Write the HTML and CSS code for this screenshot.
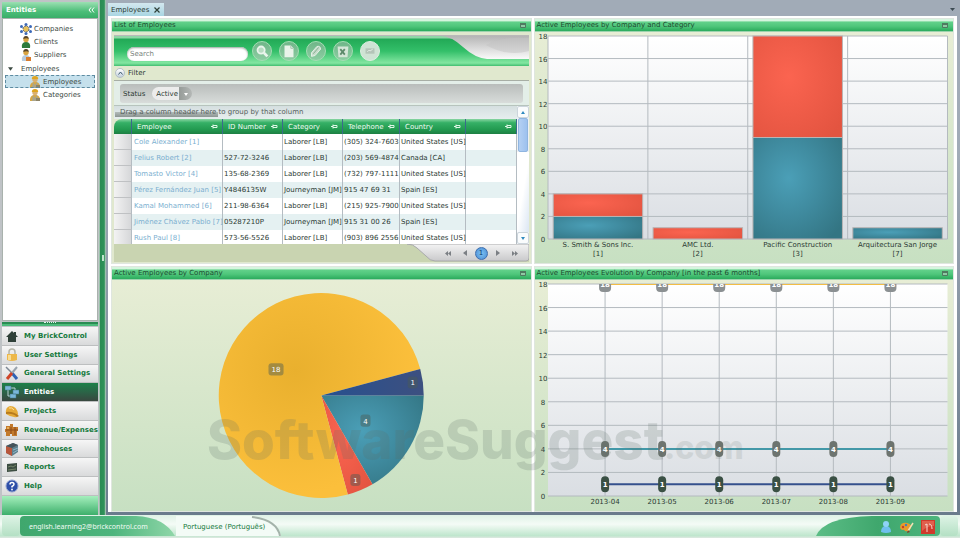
FILE: index.html
```
<!DOCTYPE html>
<html lang="en">

<head>
    <meta charset="utf-8">
    <title>Employees</title>
    <link rel="stylesheet" href="styles.css">
    <script src="charts.js" defer></script>
</head>

<body>
    <!-- Shared icon shapes -->
    <svg class="defs" aria-hidden="true">
        <defs>
            <symbol id="i-person" viewBox="0 0 12 12">
                <path d="M2 12q-1-5 3-6h2q4 1 3 6z" fill="currentColor" />
                <circle cx="6" cy="3.500" r="2.700" fill="#d9a441" />
                <path d="M3.300 3q0-3 2.700-3t2.700 3q-2-1.500-5.400 0z" fill="#5a4526" />
            </symbol>
            <symbol id="i-worker" viewBox="0 0 12 12">
                <path d="M1 12q-.5-5 3.500-6h3q4 1 3.500 6z" fill="#d8a844" />
                <path d="M4 6l2 3 2-3 1 6H3z" fill="#a9a58c" />
                <circle cx="6" cy="3.500" r="2.700" fill="#d9b071" />
                <path d="M2.800 3q0-3 3.200-3t3.200 3z" fill="#e0a520" />
                <path d="M7 9h4v3H7z" fill="#8d8468" />
            </symbol>
            <symbol id="i-pin" viewBox="0 0 7 5">
                <path d="M0 2.500h2M2 .5v4M2 1.500h4v2H2" fill="none" stroke="#dff5e6" />
            </symbol>
            <symbol id="i-window" viewBox="0 0 6 5">
                <path d="M.5 .5h5v4h-5z" fill="#8fc9a4" stroke="#4f7a60" />
                <path d="M0 0h6v2H0z" fill="#4f7a60" />
            </symbol>
            <radialGradient id="g-teal" cx=".4" cy=".4" r=".75">
                <stop offset="0" stop-color="#4b9fb7" />
                <stop offset=".5" stop-color="#3f8a9e" />
                <stop offset="1" stop-color="#337583" />
            </radialGradient>
            <radialGradient id="g-red" cx=".4" cy=".4" r=".75">
                <stop offset="0" stop-color="#fb6450" />
                <stop offset="1" stop-color="#e35440" />
            </radialGradient>
            <radialGradient id="g-yellow" cx=".38" cy=".38" r=".6">
                <stop offset="0" stop-color="#e9b02e" />
                <stop offset="1" stop-color="#fbbf3b" />
            </radialGradient>
            <linearGradient id="g-navy">
                <stop offset="0" stop-color="#27508f" />
                <stop offset="1" stop-color="#3d5080" />
            </linearGradient>
            <linearGradient id="g-plot" x2="0" y2="1">
                <stop offset="0" stop-color="#ffffff" />
                <stop offset="1" stop-color="#dadee3" />
            </linearGradient>
            <linearGradient id="g-swoosh" x2="0" y2="1">
                <stop offset="0" stop-color="#b5b5b5" />
                <stop offset="1" stop-color="#fafafa" />
            </linearGradient>
            <linearGradient id="g-pager" x2="0" y2="1">
                <stop offset="0" stop-color="#f4f4f4" />
                <stop offset="1" stop-color="#c9c9cb" />
            </linearGradient>
            <linearGradient id="g-leaf">
                <stop offset="0" stop-color="#5cbd86" />
                <stop offset=".5" stop-color="#3fa76d" />
                <stop offset="1" stop-color="#4db57d" />
            </linearGradient>
            <linearGradient id="g-user">
                <stop offset="0" stop-color="#3fa76d" />
                <stop offset=".6" stop-color="#4db57d" />
                <stop offset="1" stop-color="#8fd6a8" />
            </linearGradient>
        </defs>
    </svg>

    <div class="workspace">
        <aside class="sidebar">
            <header class="side-title">
                <span>Entities</span>
                <button class="icon-btn" type="button" aria-label="Collapse">
                    <svg width="7" height="6" viewBox="0 0 7 6"><path d="M3 .5L1 3l2 2.500M6 .5L4 3l2 2.500" fill="none" stroke="#fff" /></svg>
                </button>
            </header>

            <ul class="tree">
                <li class="leaf"><a href="#companies">
                    <svg class="tree-icon" viewBox="0 0 12 12">
                        <g fill="#3c69b8"><circle cx="6" cy="1.500" r="1.500" /><circle cx="6" cy="10.500" r="1.500" /><circle cx="1.500" cy="3.500" r="1.500" /><circle cx="10.500" cy="3.500" r="1.500" /><circle cx="1.500" cy="8.500" r="1.500" /><circle cx="10.500" cy="8.500" r="1.500" /></g>
                        <circle cx="6" cy="6" r="3" fill="#e8c25a" stroke="#54617a" stroke-dasharray="2 1" />
                    </svg>Companies</a></li>
                <li class="leaf"><a href="#clients"><svg class="tree-icon client"><use href="#i-person" /></svg>Clients</a></li>
                <li class="leaf"><a href="#suppliers"><svg class="tree-icon supplier"><use href="#i-person" /><path d="M6 8h5v4H6z" fill="#d97c2c" /></svg>Suppliers</a></li>
                <li class="branch"><a href="#all"><svg class="arrow" viewBox="0 0 6 4"><path d="M0 0h6L3 4z" fill="#3c4a42" /></svg>Employees</a></li>
                <li class="child selected"><a href="#employees"><svg class="tree-icon"><use href="#i-worker" /></svg>Employees</a></li>
                <li class="child"><a href="#categories"><svg class="tree-icon"><use href="#i-worker" /></svg>Categories</a></li>
            </ul>

            <div class="side-split"></div>

            <nav class="modules">
                <a href="#home"><svg viewBox="0 0 14 14"><path d="M1 8l6-6 2 2V3h2v3l2 2h-2v5H3V8z" fill="#2f4038" /></svg>My BrickControl</a>
                <a href="#user"><svg viewBox="0 0 14 14"><path d="M4 7V4q0-3 3-3t3 3v3" fill="none" stroke="#b5b5a8" stroke-width="1.500" /><path d="M2 6h10v6q-5 2-10 0z" fill="#edb84a" /><path d="M3 7h3v5H3z" fill="#f9dc92" /></svg>User Settings</a>
                <a href="#general"><svg viewBox="0 0 14 14"><path d="M1 1l7 7" stroke="#7d8894" stroke-width="1.500" /><path d="M7 7l5 6" stroke="#2f62b5" stroke-width="3" /><path d="M12 1L7 7" stroke="#9aa4ad" stroke-width="2" /><path d="M7 7l-5 6" stroke="#cf4428" stroke-width="3" /></svg>General Settings</a>
                <a class="active" href="#entities"><svg viewBox="0 0 14 14"><path d="M3 4v7h5M5 3h5v3" fill="none" stroke="#b8d3d4" /><path d="M0 1h6v4H0zM8 5h6v4H8zM5 9h6v4H5z" fill="#79b7d8" stroke="#40788f" stroke-width=".5" /></svg>Entities</a>
                <a href="#projects"><svg viewBox="0 0 14 14"><path d="M1 10Q0 3 5 2q7 0 8 8l-1 3q-5 1-11-3z" fill="#e5aa37" /><path d="M1 10q7-1 11 3l2-1Q8 7 1 8z" fill="#b77b1d" /><path d="M4 4q3-1 5 2" fill="none" stroke="#ffe09a" /></svg>Projects</a>
                <a href="#money"><svg viewBox="0 0 14 14"><path d="M1 3h4V1h3v3h5v4h-1v5H7v-2H5v2H1V9H0V6h1z" fill="#c37a2c" /><path d="M6 4v7M1 7h12M10 4v8" stroke="#8c4a18" /><path d="M2 4h2v2H2z" fill="#e8b057" /></svg>Revenue/Expenses</a>
                <a href="#warehouses"><svg viewBox="0 0 14 14"><path d="M1 4l7-3 5 2v7l-6 4-6-3z" fill="#5f7f8c" /><path d="M1 4l6 2v8l-6-3z" fill="#b8573c" /><path d="M1 4l7-3 5 2-6 3z" fill="#44535a" /><path d="M8 8l5-2M8 11l5-3" stroke="#8bb7c9" /></svg>Warehouses</a>
                <a href="#reports"><svg viewBox="0 0 14 14"><path d="M2 4l10-1v8l-10 1z" fill="#3c4d42" /><path d="M3 7l3-1 2 1 3-2M3 10l8-1" fill="none" stroke="#75856a" /></svg>Reports</a>
                <a href="#help"><svg viewBox="0 0 14 14"><circle cx="7" cy="7" r="6" fill="#2e4fa8" stroke="#8d9fcf" /><path d="M5 5.500q0-2 2-2t2 1.800q0 1-2 2.200v1" fill="none" stroke="#fff" stroke-width="1.500" /><circle cx="7" cy="10.500" r=".9" fill="#fff" /></svg>Help</a>
            </nav>
            <div class="side-foot"></div>
        </aside>

        <div class="gutter"></div>

        <main class="main">
            <div class="tabs">
                <div class="tab">
                    <a href="#employees">Employees</a>
                    <button class="icon-btn" type="button" aria-label="Close tab">
                        <svg width="6" height="6" viewBox="0 0 6 6"><path d="M.5 .5l5 5M5.500 .5l-5 5" stroke="#2f4038" stroke-width="1.200" /></svg>
                    </button>
                </div>
                <button class="icon-btn" type="button" aria-label="Tab list">
                    <svg width="5" height="3" viewBox="0 0 5 3"><path d="M0 0h5L2.500 3z" fill="#3c4a52" /></svg>
                </button>
            </div>

            <div class="dashboard">
                <section class="panel">
                    <header class="panel-title">
                        <h2>List of Employees</h2>
                        <button class="icon-btn" type="button" aria-label="Maximize"><svg width="6" height="5"><use href="#i-window" /></svg></button>
                    </header>
                    <div class="list">
                        <div class="toolbar">
                            <input class="search" type="search" placeholder="Search" aria-label="Search">
                            <button class="round" type="button" aria-label="Find"><svg viewBox="0 0 20 20"><circle cx="9" cy="9" r="4" fill="#b9dcc3" stroke="#e9f5ec" stroke-width="2" /><path d="M12 12l4 4" stroke="#e9f5ec" stroke-width="3" /></svg></button>
                            <button class="round" type="button" aria-label="New"><svg viewBox="0 0 20 20"><path d="M5 4h7l3 3v10H5z" fill="#e9f3ea" /><path d="M12 4v3h3" fill="none" stroke="#9fbfa8" /></svg></button>
                            <button class="round" type="button" aria-label="Edit"><svg viewBox="0 0 20 20"><path d="M5 12l6-7q4-1 4 3l-6 7-4 1z" fill="#c7dccb" stroke="#e9f3ea" /><path d="M7 13l6-7" stroke="#7fa98b" /></svg></button>
                            <button class="round" type="button" aria-label="Delete"><svg viewBox="0 0 20 20"><path d="M4 5h12l-1 12H5z" fill="#d5e6d8" /><path d="M7 8l5 6M12 8l-5 6" stroke="#5d8a6b" stroke-width="2" /></svg></button>
                            <button class="round off" type="button" aria-label="Export"><svg viewBox="0 0 20 20"><path d="M5 7h10v6H5z" fill="#b4c5b8" /><path d="M7 11l2-2 1 1 3-2" fill="none" stroke="#e8efe9" /></svg></button>
                            <svg class="swoosh" viewBox="0 0 88 30" preserveAspectRatio="none">
                                <path d="M0 0h88v23H46Q34 22 22 11T0 0z" fill="url(#g-swoosh)" />
                                <path d="M45 9q14-9 43-7v13q-22 6-43-6z" fill="#c4c4c4" opacity=".5" />
                            </svg>
                        </div>

                        <div class="filter-head">
                            <button class="fold" type="button" aria-label="Collapse filter"><svg width="5" height="4" viewBox="0 0 5 4"><path d="M.5 3.500l2-2.500 2 2.500" fill="none" stroke="#3c5a70" /></svg></button>
                            Filter
                        </div>
                        <div class="filter">
                            <div class="filter-box">
                                <label for="status">Status</label>
                                <span class="select-wrap">
                                    <select id="status">
                                        <option>Active</option>
                                        <option>Inactive</option>
                                    </select>
                                </span>
                            </div>
                        </div>

                        <div class="grid-area">
                            <div class="grid-left">
                                <div class="group-bar">Drag a column header here to group by that column</div>
                                <table class="grid">
                                    <thead>
                                        <tr>
                                            <th class="c-mark"></th>
                                            <th class="c-name"><span>Employee<svg><use href="#i-pin" /></svg></span></th>
                                            <th class="c-id"><span>ID Number<svg><use href="#i-pin" /></svg></span></th>
                                            <th class="c-cat"><span>Category<svg><use href="#i-pin" /></svg></span></th>
                                            <th class="c-tel"><span>Telephone<svg><use href="#i-pin" /></svg></span></th>
                                            <th class="c-country"><span>Country<svg><use href="#i-pin" /></svg></span></th>
                                            <th><span class="only-pin"><svg><use href="#i-pin" /></svg></span></th>
                                        </tr>
                                    </thead>
                                    <tbody>
                                        <tr><td></td><td><a href="#e1">Cole Alexander [1]</a></td><td></td><td>Laborer [LB]</td><td>(305) 324-7603</td><td>United States [US]</td><td></td></tr>
                                        <tr><td></td><td><a href="#e2">Felius Robert [2]</a></td><td>527-72-3246</td><td>Laborer [LB]</td><td>(203) 569-4874</td><td>Canada [CA]</td><td></td></tr>
                                        <tr><td></td><td><a href="#e4">Tomasto Victor [4]</a></td><td>135-68-2369</td><td>Laborer [LB]</td><td>(732) 797-1111</td><td>United States [US]</td><td></td></tr>
                                        <tr><td></td><td><a href="#e5">Pérez Fernández Juan [5]</a></td><td>Y4846135W</td><td>Journeyman [JM]</td><td>915 47 69 31</td><td>Spain [ES]</td><td></td></tr>
                                        <tr><td></td><td><a href="#e6">Kamal Mohammed [6]</a></td><td>211-98-6364</td><td>Laborer [LB]</td><td>(215) 925-7900</td><td>United States [US]</td><td></td></tr>
                                        <tr><td></td><td><a href="#e7">Jiménez Chávez Pablo [7]</a></td><td>05287210P</td><td>Journeyman [JM]</td><td>915 31 00 26</td><td>Spain [ES]</td><td></td></tr>
                                        <tr><td></td><td><a href="#e8">Rush Paul [8]</a></td><td>573-56-5526</td><td>Laborer [LB]</td><td>(903) 896 2556</td><td>United States [US]</td><td></td></tr>
                                    </tbody>
                                </table>
                            </div>
                            <div class="scroll">
                                <button type="button" aria-label="Scroll up"><svg width="4" height="3" viewBox="0 0 4 3"><path d="M0 3h4L2 0z" fill="#2f8ac0" /></svg></button>
                                <div class="thumb"></div>
                                <div class="track"></div>
                                <button type="button" aria-label="Scroll down"><svg width="4" height="3" viewBox="0 0 4 3"><path d="M0 0h4L2 3z" fill="#2f8ac0" /></svg></button>
                            </div>
                        </div>

                        <div class="pager-row">
                            <nav class="pager" aria-label="Pages">
                                <svg class="pager-bg" viewBox="0 0 122 18" preserveAspectRatio="none"><path d="M0 0h122v14q0 3-3 3H28q-5 0-9-5L10 4Q6 0 0 0z" fill="url(#g-pager)" stroke="#a9aaac" /></svg>
                                <button type="button" aria-label="First"><svg width="6" height="5" viewBox="0 0 6 5"><path d="M3 0v5L0 2.500zM6 0v5L3 2.500z" fill="#7b7f84" /></svg></button>
                                <button type="button" aria-label="Previous"><svg width="4" height="6" viewBox="0 0 4 6"><path d="M4 0v6L0 3z" fill="#7b7f84" /></svg></button>
                                <button class="page" type="button">1</button>
                                <button type="button" aria-label="Next"><svg width="4" height="6" viewBox="0 0 4 6"><path d="M0 0v6l4-3z" fill="#7b7f84" /></svg></button>
                                <button type="button" aria-label="Last"><svg width="6" height="5" viewBox="0 0 6 5"><path d="M0 0v5l3-2.500zM3 0v5l3-2.500z" fill="#7b7f84" /></svg></button>
                            </nav>
                        </div>
                    </div>
                </section>

                <section class="panel">
                    <header class="panel-title">
                        <h2>Active Employees by Company and Category</h2>
                        <button class="icon-btn" type="button" aria-label="Maximize"><svg width="6" height="5"><use href="#i-window" /></svg></button>
                    </header>
                    <div class="chart tall-labels"><svg id="bars"></svg></div>
                </section>

                <section class="panel">
                    <header class="panel-title">
                        <h2>Active Employees by Company</h2>
                        <button class="icon-btn" type="button" aria-label="Maximize"><svg width="6" height="5"><use href="#i-window" /></svg></button>
                    </header>
                    <div class="chart pie"><svg id="pie" viewBox="-102 -102 204 204"></svg></div>
                </section>

                <section class="panel">
                    <header class="panel-title">
                        <h2>Active Employees Evolution by Company [in the past 6 months]</h2>
                        <button class="icon-btn" type="button" aria-label="Maximize"><svg width="6" height="5"><use href="#i-window" /></svg></button>
                    </header>
                    <div class="chart"><svg id="lines"></svg></div>
                </section>
            </div>
        </main>
    </div>

    <footer class="status">
        <div class="cap"></div>
        <div class="user">
            <svg class="shape" viewBox="0 0 156 20" preserveAspectRatio="none"><path d="M4 0h112q28 1 39 20H4q-4 0-4-4V4q0-4 4-4z" fill="url(#g-user)" /></svg>
            <span>english.learning2@brickcontrol.com</span>
        </div>
        <a class="lang" href="#lang">
            <svg class="shape" viewBox="0 0 106 20" preserveAspectRatio="none"><path d="M0 0h76q25 3 29 20H0z" fill="#f3fbf6" /><path d="M76 1q25 3 28 19" fill="none" stroke="#a4b3aa" stroke-width="2" /></svg>
            <span>Portuguese (Português)</span>
        </a>
        <div class="tray">
            <svg class="shape" viewBox="0 0 124 20" preserveAspectRatio="none"><path d="M0 20Q8 1 56 0h64q4 0 4 4v12q0 4-4 4z" fill="url(#g-leaf)" /></svg>
            <button type="button" aria-label="Users"><svg viewBox="0 0 14 14"><path d="M2 12q0-5 4-6h2q4 1 4 6-5 2-10 0z" fill="#6fc0ee" /><circle cx="7" cy="4" r="3" fill="#8fd3f6" /></svg></button>
            <button type="button" aria-label="Theme"><svg viewBox="0 0 14 14"><path d="M0 7q1-5 7-4 5 1 4 5-2 4-6 3-1-2-3-1-2-1-2-3z" fill="#e89b2b" /><circle cx="3" cy="7" r="1.200" fill="#c5402c" /><circle cx="6" cy="5" r="1.200" fill="#3f7fc0" /><path d="M13 3l-5 8" stroke="#f1e2b5" stroke-width="1.500" /><path d="M8 10l2 2-3 1z" fill="#8a3d20" /></svg></button>
            <button type="button" aria-label="Exit"><svg viewBox="0 0 14 14"><path d="M0 0h14v14H0z" fill="#cf3a2c" /><path d="M1 1h12v5Q6 6 1 11z" fill="#e0604d" /><path d="M4 5l2-1v8M8 4q3 0 3 5" fill="none" stroke="#f8d9d0" /></svg></button>
        </div>
        <div class="cap"></div>
    </footer>

    <div class="watermark">SoftwareSuggest<small>.com</small></div>
</body>

</html>
```
FILE: styles.css
```
* {
    box-sizing: border-box;
}

body {
    margin: 0;
    height: 100vh;
    display: flex;
    flex-direction: column;
    overflow: hidden;
    position: relative;
    font-family: "DejaVu Sans", Verdana, sans-serif;
    font-size: 7px;
    line-height: 10px;
    color: #2b3a33;
    background-color: #eef3ef;
}

a {
    color: inherit;
    text-decoration: none;
}

button,
input,
select {
    font: inherit;
    color: inherit;
    margin: 0;
    padding: 0;
    border: 0;
    background: none;
}

svg {
    display: block;
    flex: none;
}

.defs {
    position: absolute;
    width: 0;
    height: 0;
}

.icon-btn {
    display: flex;
}

.workspace {
    flex: 1;
    min-height: 0;
    display: flex;
}

/* ---- sidebar ---- */
.sidebar {
    width: 99px;
    display: flex;
    flex-direction: column;
    padding: 2px 1px 0 2px;
    background-color: #bfc3c6;
}

.side-title {
    display: flex;
    justify-content: space-between;
    align-items: center;
    height: 16px;
    padding: 0 3px 0 4px;
    color: #fff;
    font-weight: bold;
    background: linear-gradient(#9be0b2, #4bbd78 60%, #3aae69);
}

.tree {
    flex: 1;
    margin: 0;
    padding: 3px 2px 0;
    list-style: none;
    background-color: #fff;
    border: 1px solid #a9b2ad;
}

.tree li {
    height: 13px;
    color: #3d4a44;
}

.tree li:nth-child(3n) {
    height: 14px;
}

.tree a {
    display: flex;
    align-items: center;
    gap: 2px;
    height: 100%;
}

.tree-icon {
    width: 12px;
    height: 12px;
}

.client {
    color: #2d7a3b;
}

.supplier {
    color: #b9cbdc;
}

.tree .leaf {
    padding-left: 15px;
}

.tree .branch {
    padding-left: 3px;
}

.tree .branch a {
    gap: 8px;
}

.arrow {
    width: 5px;
    height: 4px;
}

.tree .child {
    padding-left: 24px;
}

.selected {
    background-color: #c5e0ec;
    outline: 1px dashed #5d8ba1;
    outline-offset: -1px;
}

.side-split {
    height: 4px;
    margin: 1px 0;
    background: linear-gradient(#2a8c53 50%, #4cbb7b 50%);
}

.side-split::before {
    content: "";
    display: block;
    width: 12px;
    margin: 0 auto;
    border-top: 1px dotted #e3f6ea;
}

.modules {
    display: grid;
    grid-template-rows: repeat(9, 1fr);
    height: 169px;
}

.modules a {
    display: flex;
    align-items: center;
    gap: 5px;
    padding-left: 3px;
    font-weight: bold;
    white-space: nowrap;
    color: #13793b;
    background: linear-gradient(#f6f6f6, #d9dadb);
    border-bottom: 1px solid #bdbfc0;
}

.modules svg {
    width: 14px;
    height: 14px;
}

.modules .active {
    color: #fff;
    background: linear-gradient(#1d8049, #2b6447 50%, #38473f);
}

.side-foot {
    height: 19px;
    background: linear-gradient(#a5efbd, #3daf6b);
}

.gutter {
    width: 7px;
    background: linear-gradient(#bfe5cc, #bfe5cc) center / 2px 6px no-repeat, linear-gradient(90deg, #d9e3dc, #2b8c54 20%, #2f9259 75%, #c9d4cd);
}

/* ---- main area ---- */
.main {
    flex: 1;
    min-width: 0;
    display: flex;
    flex-direction: column;
    padding: 2px 3px 3px 2px;
    background: linear-gradient(#a1abb7 30%, #6a7b8c);
}

.tabs {
    display: flex;
    justify-content: space-between;
    align-items: center;
    height: 14px;
    padding-right: 2px;
}

.tab {
    display: flex;
    align-items: center;
    gap: 5px;
    height: 13px;
    align-self: flex-end;
    padding: 0 4px 0 3px;
    background: linear-gradient(#d3e8ef, #a9d5e2);
}

.dashboard {
    flex: 1;
    min-height: 0;
    display: grid;
    grid-template-columns: 1fr 1fr;
    grid-template-rows: 1fr 1fr;
    gap: 2px;
    padding: 2px 3px 0;
    background-color: #fff;
}

.panel {
    min-width: 0;
    min-height: 0;
    display: flex;
    flex-direction: column;
    border: 1px solid #dfe6df;
    background: linear-gradient(#e9eed6, #c7e0c2);
}

.panel-title {
    display: flex;
    justify-content: space-between;
    align-items: center;
    height: 13px;
    padding: 0 5px 0 2px;
    background: linear-gradient(#d5f5de, #d5f5de 15%, #62d18a 25%, #4fc67b 60%, #2bab5c);
    border-bottom: 1px solid #9dd3ae;
}

.panel-title h2 {
    margin: 0;
    font-size: 7px;
    font-weight: normal;
    color: #1d4a30;
}

/* ---- employee list ---- */
.list {
    flex: 1;
    min-height: 0;
    display: flex;
    flex-direction: column;
    padding: 3px 2px 1px;
    background-color: #e0e8ce;
}

.toolbar {
    position: relative;
    display: flex;
    align-items: center;
    gap: 7px;
    height: 31px;
    padding: 0 13px;
    background: linear-gradient(#8fd6a6 0 2px, #22a956 3px, #33bf69 50%, #83e6a1 90%, #41bd70);
    border-top: 1px solid #b9b9b9;
}

.search {
    width: 121px;
    height: 14px;
    padding: 0 3px;
    margin-top: 6px;
    margin-right: -3px;
    border-radius: 7px;
    background-color: #fff;
    box-shadow: inset 0 1px 2px #9aa69e;
}

.search::placeholder {
    color: #777f7b;
}

.round {
    width: 20px;
    height: 20px;
    border-radius: 50%;
    border: 1px solid #a5dcb4;
    background: linear-gradient(#6fb588, #8ccda2);
}

.round.off {
    background: #cfe3d4;
    border-color: #dcefe0;
}

.swoosh {
    position: absolute;
    top: 0;
    right: 0;
    width: 88px;
    height: 30px;
}

.filter-head {
    display: flex;
    align-items: center;
    gap: 3px;
    height: 14px;
    padding-left: 1px;
}

.fold {
    display: flex;
    align-items: center;
    justify-content: center;
    width: 10px;
    height: 10px;
    border-radius: 50%;
    background: linear-gradient(#fff, #c2d0dc);
    border: 1px solid #b4c0c8;
}

.filter {
    padding: 3px 6px 2px;
    background-color: #e3eee8;
    border-top: 1px solid #a7aea5;
    border-bottom: 1px solid #b7c4bd;
}

.filter-box {
    display: flex;
    align-items: center;
    gap: 7px;
    height: 19px;
    padding: 0 3px;
    border-radius: 3px;
    background: linear-gradient(#b9bdbb, #d8dcda);
}

.select-wrap {
    position: relative;
}

.select-wrap::after {
    content: "";
    position: absolute;
    right: 4px;
    top: 6px;
    border: 2px solid transparent;
    border-top: 3px solid #fff;
    pointer-events: none;
}

select {
    appearance: none;
    width: 40px;
    height: 13px;
    padding-left: 4px;
    border-radius: 7px;
    background: linear-gradient(90deg, #ececec 68%, #969b98 68%, #b4b8b6);
}

.grid-area {
    flex: 1;
    min-height: 0;
    display: flex;
    overflow: hidden;
}

.grid-left {
    flex: 1;
    min-width: 0;
}

.group-bar {
    height: 13px;
    padding: 1px 6px;
    color: #56605b;
    background: linear-gradient(#b3bcba, #8d9693) 1px 6px / 103px 5px no-repeat, linear-gradient(#d5dfe0, #e6eeee);
}

.grid {
    width: 100%;
    table-layout: fixed;
    border-collapse: separate;
    border-spacing: 0;
}

.grid th {
    height: 15px;
    padding: 0;
    font-weight: normal;
    color: #effaf2;
    background: linear-gradient(#8ad6a3, #35b066 25%, #229a50 70%, #1d7f43);
    border-right: 1px solid #3a6a8c;
}

.grid th:first-child {
    border-top-left-radius: 8px;
}

.grid th span {
    display: flex;
    justify-content: space-between;
    align-items: center;
    padding: 0 4px 0 5px;
}

.grid th .only-pin {
    justify-content: flex-end;
}

.grid th svg {
    width: 7px;
    height: 5px;
}

.c-mark { width: 18px; }
.c-name { width: 91px; }
.c-id { width: 60px; }
.c-cat { width: 60px; }
.c-tel { width: 57px; }
.c-country { width: 66px; }

.grid td {
    height: 16px;
    padding: 0 0 0 1px;
    white-space: nowrap;
    background-color: #fff;
    border-right: 1px solid #b4bcc2;
}

.grid tr:nth-child(even) td {
    background-color: #e5f1f2;
}

.grid td:nth-child(2) {
    padding-left: 2px;
    color: #7bafd0;
}

.grid tbody tr td:first-child {
    background: linear-gradient(90deg, #f3f3f3, #d6d7d9);
    border-bottom: 1px solid #bfc1c3;
}

.scroll {
    display: flex;
    flex-direction: column;
    width: 12px;
    background-color: #eef1f4;
}

.scroll button {
    display: flex;
    align-items: center;
    justify-content: center;
    height: 12px;
    border: 1px solid #ccd5dc;
    border-radius: 2px;
    background-color: #fafcfd;
}

.thumb {
    height: 34px;
    margin: 0 1px;
    border: 1px solid #8fb5e0;
    border-radius: 2px;
    background: linear-gradient(90deg, #b4d0f3, #9dc1ee);
}

.track {
    flex: 1;
    background: linear-gradient(100deg, #fff 50%, #dbe6f3);
}

.pager-row {
    display: flex;
    justify-content: flex-end;
    height: 18px;
    background-color: #c9d4b1;
}

.pager {
    position: relative;
    display: flex;
    align-items: center;
    justify-content: flex-end;
    gap: 12px;
    width: 122px;
    padding-right: 11px;
}

.pager button {
    position: relative;
}

.pager-bg {
    position: absolute;
    left: 0;
    top: 0;
    width: 100%;
    height: 18px;
}

.pager .page {
    width: 13px;
    height: 13px;
    margin: 0 -4px;
    border-radius: 50%;
    border: 1px solid #3d6fae;
    color: #123a66;
    background: radial-gradient(#7cc3f2, #4a8ad4);
}

/* ---- charts ---- */
.chart {
    flex: 1;
    min-height: 0;
    padding: 4px 6px 15px 13px;
}

.chart.tall-labels {
    padding-bottom: 24px;
}

.chart.pie {
    padding: 13px;
}

.chart > svg {
    width: 100%;
    height: 100%;
    overflow: visible;
}

.chart text {
    font-size: 7px;
    text-anchor: middle;
    fill: #2b3a33;
}

.chart text.value {
    fill: #fff;
}

.chart text.bold {
    font-weight: bold;
}

.grid-line {
    stroke: #b4babf;
}

/* ---- status bar ---- */
.status {
    display: flex;
    align-items: stretch;
    height: 23px;
    padding: 1px 2px 2px;
    background: linear-gradient(#dff2e6, #f4fbf6 40%, #bfe6cd 90%, #dfe8e2);
}

.status .shape {
    position: absolute;
    left: 0;
    top: 0;
    width: 100%;
    height: 100%;
}

.status span {
    position: relative;
}

.cap {
    width: 18px;
    border-radius: 4px;
    background: linear-gradient(#ddf3e5, #b4e0c4);
}

.user,
.lang,
.tray {
    position: relative;
    display: flex;
    align-items: center;
    padding-top: 2px;
}

.user {
    width: 156px;
    padding-left: 9px;
    font-family: "Noto Sans", sans-serif;
    color: #f1fbf4;
}

.lang {
    width: 106px;
    padding-left: 7px;
    color: #13793b;
}

.tray {
    width: 124px;
    margin-left: auto;
    justify-content: flex-end;
    gap: 7px;
    padding-right: 5px;
}

.tray button {
    position: relative;
    width: 14px;
    height: 14px;
}

.watermark {
    position: absolute;
    left: 207px;
    top: 408px;
    font: 800 53px/64px Inter, "Open Sans", sans-serif;
    color: #5d6e66;
    opacity: .2;
    pointer-events: none;
    white-space: nowrap;
}

.watermark small {
    font-size: 32px;
    opacity: .7;
}
```
FILE: charts.js
```
"use strict";

const SVG = "http://www.w3.org/2000/svg";
const MAX = 18;

function add(parent, tag, attrs, text) {
    const el = document.createElementNS(SVG, tag);
    for (const key in attrs) {
        el.setAttribute(key, attrs[key]);
    }
    if (text !== undefined) {
        el.textContent = text;
    }
    parent.appendChild(el);
    return el;
}

function yPos(value) {
    return (100 - value / MAX * 100) + "%";
}

// Plot background, horizontal lines and the value axis
function drawAxis(svg) {
    add(svg, "rect", { width: "100%", height: "100%", fill: "url(#g-plot)" });
    for (let v = 0; v <= MAX; v += 2) {
        add(svg, "line", { x1: 0, x2: "100%", y1: yPos(v), y2: yPos(v), class: "grid-line" });
        add(svg, "text", { x: -5, y: yPos(v), dy: 3 }, v);
    }
}

function drawBars() {
    const svg = document.getElementById("bars");
    const data = [
        { name: "S. Smith & Sons Inc.", id: "[1]", teal: 2, red: 2 },
        { name: "AMC Ltd.", id: "[2]", teal: 0, red: 1 },
        { name: "Pacific Construction", id: "[3]", teal: 9, red: 9 },
        { name: "Arquitectura San Jorge", id: "[7]", teal: 1, red: 0 }
    ];
    drawAxis(svg);
    for (let i = 0; i <= 4; i++) {
        add(svg, "line", { x1: i * 25 + "%", x2: i * 25 + "%", y1: 0, y2: "100%", class: "grid-line" });
    }
    data.forEach((d, i) => {
        let total = 0;
        ["teal", "red"].forEach((color) => {
            if (!d[color]) return;
            total += d[color];
            add(svg, "rect", {
                x: i * 25 + 1.3 + "%", width: "22.4%",
                y: yPos(total), height: d[color] / MAX * 100 + "%",
                fill: "url(#g-" + color + ")", stroke: "#b9b4b4"
            });
        });
        const mid = i * 25 + 12.5 + "%";
        add(svg, "text", { x: mid, y: "100%", dy: 8 }, d.name);
        add(svg, "text", { x: mid, y: "100%", dy: 17 }, d.id);
    });
}

function drawLines() {
    const svg = document.getElementById("lines");
    const months = ["2013-04", "2013-05", "2013-06", "2013-07", "2013-08", "2013-09"];
    const series = [
        { value: 18, line: "#f2bd45", badge: "#8b9092", width: 12 },
        { value: 4, line: "#4398a8", badge: "#6d746f", width: 8 },
        { value: 1, line: "#35508c", badge: "#3a5044", width: 8 }
    ];
    const step = 100 / 7;
    drawAxis(svg);
    months.forEach((m, i) => {
        const x = (i + 1) * step + "%";
        add(svg, "line", { x1: x, x2: x, y1: 0, y2: "100%", class: "grid-line" });
        add(svg, "text", { x: x, y: "100%", dy: 8 }, m);
    });
    // nested svg clips the badges at the top of the plot
    const plot = add(svg, "svg", { width: "100%", height: "100%" });
    series.forEach((s) => {
        const y = yPos(s.value);
        add(plot, "line", { x1: step + "%", x2: step * 6 + "%", y1: y, y2: y, stroke: s.line, "stroke-width": 2 });
        months.forEach((m, i) => {
            const x = (i + 1) * step + "%";
            const box = add(plot, "svg", { x: x, y: y, overflow: "visible" });
            add(box, "rect", { x: -s.width / 2, y: -8, width: s.width, height: 16, rx: 4, fill: s.badge });
            add(box, "text", { y: 3, class: "value bold" }, s.value);
        });
    });
}

function drawPie() {
    const svg = document.getElementById("pie");
    const data = [
        { value: 4, color: "teal", x: 44, y: 25 },
        { value: 1, color: "red", x: 34, y: 84 },
        { value: 18, color: "yellow", x: -45, y: -26 },
        { value: 1, color: "navy", x: 91, y: -13 }
    ];
    const r = 102;
    let angle = 0;
    data.forEach((d) => {
        const end = angle + d.value / 24 * 2 * Math.PI;
        const large = end - angle > Math.PI ? 1 : 0;
        const path = "M0 0L" + r * Math.cos(angle) + " " + r * Math.sin(angle) +
            "A" + r + " " + r + " 0 " + large + " 1 " + r * Math.cos(end) + " " + r * Math.sin(end) + "Z";
        add(svg, "path", { d: path, fill: "url(#g-" + d.color + ")" });
        angle = end;
    });
    data.forEach((d) => {
        const w = d.value > 9 ? 15 : 10;
        add(svg, "rect", { x: d.x - w / 2, y: d.y - 6, width: w, height: 12, rx: 3, fill: "#4c5a55", "fill-opacity": .45 });
        add(svg, "text", { x: d.x, y: d.y + 3, class: "value" }, d.value);
    });
}

drawBars();
drawLines();
drawPie();
```
